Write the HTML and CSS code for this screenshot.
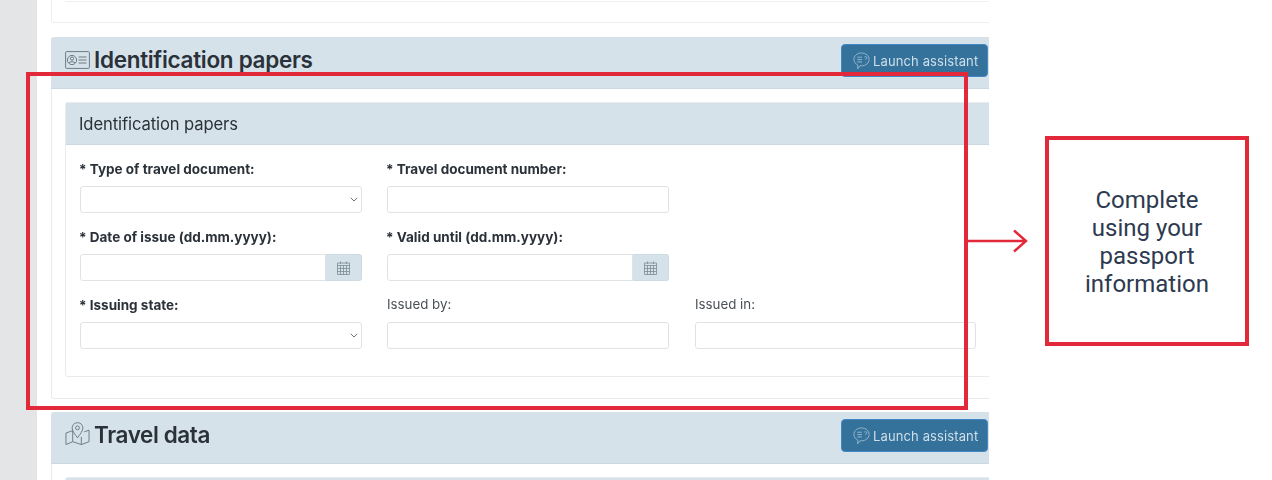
FILE: index.html
```html
<!DOCTYPE html>
<html lang="en">
<head>
<meta charset="utf-8">
<title>Identification papers</title>
<link rel="stylesheet" href="styles.css">
</head>
<body>
<div class="stage">
  <div class="gutter"></div>
  <main class="content">
    <div class="prev-card"><div class="prev-inner"></div></div>

    <section class="section section-id">
      <header class="section-head">
        <svg class="icon-id" viewBox="0 0 25 18" aria-hidden="true">
          <rect x="0.6" y="0.6" width="23.8" height="16.8" rx="1"/>
          <circle cx="7" cy="9" r="4.6"/>
          <circle cx="7" cy="7.6" r="1.6"/>
          <path d="M4 12c.6-1.700 5.400-1.700 6 0"/>
          <path d="M13.500 6h8M13.500 9h8M13.500 12h8"/>
        </svg>
        <h2 class="section-title">Identification papers</h2>
        <button class="assist" type="button">
          <svg class="icon-chat" viewBox="0 0 18 19" aria-hidden="true">
            <path d="M9 1c4.600 0 8 2.900 8 6.800s-3.400 6.800-8 6.800c-.6 0-1.100 0-1.600-.1L5 17.800v-4C2.600 12.600 1 10.400 1 7.800 1 3.900 4.400 1 9 1z"/>
            <path d="M4.500 5.500h5M4.500 8h5M4.500 10.500h5M12 5.500c.6-1 2.600-.8 2.600.6 0 1.100-1.300 1-1.300 2.200M13.300 10.500v.4"/>
          </svg>
          Launch assistant
        </button>
      </header>
      <div class="section-body">
        <div class="card">
          <h3 class="card-head">Identification papers</h3>
          <div class="form-grid">
            <div class="field">
              <label class="label req">* Type of travel document:</label>
              <div class="box select"><svg class="chev" viewBox="0 0 8 5"><path d="M.8.8 4 4 7.200.8"/></svg></div>
            </div>
            <div class="field">
              <label class="label req">* Travel document number:</label>
              <div class="box"></div>
            </div>
            <div class="field"></div>

            <div class="field">
              <label class="label req">* Date of issue (dd.mm.yyyy):</label>
              <div class="date"><div class="box grow"></div><span class="addon"><svg class="cal" viewBox="0 0 13 14"><path d="M.5 2h12v11.500H.5zM.5 4.500h12M.5 7.500h12M.5 10.500h12M3.500 4.500v9M6.500 4.500v9M9.500 4.500v9M3.500.5v2.500M9.500.5v2.500"/></svg></span></div>
            </div>
            <div class="field">
              <label class="label req">* Valid until (dd.mm.yyyy):</label>
              <div class="date"><div class="box grow"></div><span class="addon"><svg class="cal" viewBox="0 0 13 14"><path d="M.5 2h12v11.500H.5zM.5 4.500h12M.5 7.500h12M.5 10.500h12M3.500 4.500v9M6.500 4.500v9M9.500 4.500v9M3.500.5v2.500M9.500.5v2.500"/></svg></span></div>
            </div>
            <div class="field"></div>

            <div class="field">
              <label class="label req">* Issuing state:</label>
              <div class="box select"><svg class="chev" viewBox="0 0 8 5"><path d="M.8.8 4 4 7.200.8"/></svg></div>
            </div>
            <div class="field">
              <label class="label">Issued by:</label>
              <div class="box"></div>
            </div>
            <div class="field field-last">
              <label class="label">Issued in:</label>
              <div class="box"></div>
            </div>
          </div>
        </div>
      </div>
    </section>

    <section class="section section-travel">
      <header class="section-head">
        <svg class="icon-map" viewBox="0 0 26 26" aria-hidden="true">
          <path d="M8 9.500 1 12v12l7-3 9 3 8-3V9l-5 1.800"/>
          <path d="M8 9.500V21M17 16v8"/>
          <path d="M13 1.200c3.200 0 5.600 2.400 5.600 5.400 0 3.300-3 6.700-5.600 10.400-2.600-3.700-5.600-7.100-5.600-10.400 0-3 2.400-5.400 5.600-5.400z"/>
          <circle cx="13" cy="6.600" r="2"/>
        </svg>
        <h2 class="section-title">Travel data</h2>
        <button class="assist" type="button">
          <svg class="icon-chat" viewBox="0 0 18 19" aria-hidden="true">
            <path d="M9 1c4.600 0 8 2.900 8 6.800s-3.400 6.800-8 6.800c-.6 0-1.100 0-1.600-.1L5 17.800v-4C2.600 12.600 1 10.400 1 7.800 1 3.900 4.400 1 9 1z"/>
            <path d="M4.500 5.500h5M4.500 8h5M4.500 10.500h5M12 5.500c.6-1 2.600-.8 2.600.6 0 1.100-1.300 1-1.300 2.200M13.300 10.500v.4"/>
          </svg>
          Launch assistant
        </button>
      </header>
      <div class="section-body">
        <div class="card"><div class="card-head card-head-empty"></div></div>
      </div>
    </section>
  </main>

  <div class="frame"></div>
  <svg class="arrow" viewBox="0 0 60 24" aria-hidden="true"><path d="M0 12h58M46 1.500 58 12 46 22.500"/></svg>
  <aside class="callout">Complete using your passport information</aside>
</div>
</body>
</html>
```

FILE: styles.css
```css
* { box-sizing: border-box; }
html, body { margin: 0; background: #fff; }
.stage {
  position: relative;
  display: flex;
  width: 1272px;
  height: 480px;
  overflow: hidden;
  background: #fff;
}
.gutter { flex: 0 0 37px; background: #e4e5e6; }
.content {
  flex: 0 0 952px;
  height: 480px;
  padding-left: 14px;
  overflow: hidden;
  font-family: Inter, "Liberation Sans", sans-serif;
  color: #2b3138;
  filter: blur(0.5px);
}
.prev-card {
  width: 960px;
  height: 23px;
  margin-bottom: 14px;
  border: 1px solid #eceef0;
  border-top: 0;
  border-radius: 0 0 3px 3px;
  padding: 0 13px;
}
.prev-inner {
  height: 2px;
  border-bottom: 1px solid #eff0f1;
}
.section { width: 960px; margin-bottom: 13px; }
.section-head {
  display: flex;
  align-items: center;
  height: 52px;
  padding: 0 0 0 14px;
  background: #d5e2ea;
  border-bottom: 1px solid #cdd9e0;
  border-radius: 3px 3px 0 0;
}
.section-title {
  margin: -5px 0 0 4px;
  font-size: 22.5px;
  font-weight: 600;
  line-height: 28px;
  letter-spacing: -0.3px;
}
.section-travel .section-title { margin-left: 5px; letter-spacing: -0.4px; }
.icon-id {
  width: 25px;
  height: 18px;
  margin-top: -6px;
  fill: none;
  stroke: #6f7a82;
  stroke-width: 1;
}
.icon-map {
  width: 25px;
  height: 26px;
  margin-top: -7px;
  margin-right: -1px;
  fill: none;
  stroke: #6f7a82;
  stroke-width: 1;
}
.assist {
  display: flex;
  align-items: center;
  gap: 3px;
  width: 147px;
  height: 33px;
  margin: -4px 23px 0 auto;
  padding: 0 0 0 11px;
  background: #34729b;
  border: 1px solid #3f88c5;
  border-radius: 4px;
  color: #d0dfe9;
  font-family: Inter, "Liberation Sans", sans-serif;
  font-size: 13px;
  font-weight: 400;
  letter-spacing: 0.12px;
}
.icon-chat {
  width: 17px;
  height: 18px;
  fill: none;
  stroke: #98b9cd;
  stroke-width: 1;
}
.section-body {
  padding: 13px 13px 21px;
  border: 1px solid #e9ebed;
  border-top: 0;
  border-radius: 0 0 3px 3px;
}
.section-travel .section-body { padding-bottom: 0; }
.card {
  border: 1px solid #e9ebed;
  border-radius: 3px;
  height: 275px;
}
.card-head {
  margin: 0;
  height: 42px;
  padding: 0 13px;
  background: #d5e2ea;
  border-bottom: 1px solid #cdd9e0;
  font-size: 16.600px;
  font-weight: 400;
  line-height: 42px;
  letter-spacing: -0.1px;
}
.form-grid {
  display: grid;
  grid-template-columns: repeat(3, 282px);
  grid-auto-rows: 68px;
  column-gap: 25px;
  padding: 14px 14px 0;
}
.field { display: flex; flex-direction: column; }
.field-last { padding-left: 1px; }
.label {
  height: 27px;
  font-size: 13.300px;
  line-height: 18px;
  color: #4a5056;
}
.label.req {
  margin-left: -1px;
  padding-top: 1px;
  font-size: 13.500px;
  color: #2b3138;
  font-weight: 700;
}
.box {
  position: relative;
  display: block;
  height: 27px;
  background: #fff;
  border: 1px solid #dfe3e6;
  border-radius: 3px;
}
.grow { flex: 1; border-radius: 3px 0 0 3px; }
.chev {
  position: absolute;
  right: 3px;
  top: 10px;
  width: 8px;
  height: 5px;
  fill: none;
  stroke: #6b7176;
  stroke-width: 1;
}
.date { display: flex; height: 27px; }
.addon {
  display: flex;
  flex: 0 0 36px;
  align-items: center;
  justify-content: center;
  background: #d5e2ea;
  border: 1px solid #cfdbe2;
  border-left: 0;
  border-radius: 0 3px 3px 0;
}
.cal {
  width: 13px;
  height: 14px;
  fill: none;
  stroke: #7b8a94;
  stroke-width: 0.8;
}
.frame {
  position: absolute;
  left: 26px;
  top: 72px;
  width: 942px;
  height: 338px;
  border: 4px solid #e1293a;
}
.arrow {
  position: absolute;
  left: 968px;
  top: 229px;
  width: 60px;
  height: 24px;
  fill: none;
  stroke: #e1293a;
  stroke-width: 2.400;
}
.callout {
  position: absolute;
  left: 1045px;
  top: 136px;
  display: flex;
  align-items: center;
  justify-content: center;
  width: 204px;
  height: 210px;
  padding: 2px 20px 0;
  border: 4px solid #e1293a;
  font-family: Roboto, "Liberation Sans", sans-serif;
  font-size: 24px;
  line-height: 28px;
  text-align: center;
  color: #2d3a50;
}
```
